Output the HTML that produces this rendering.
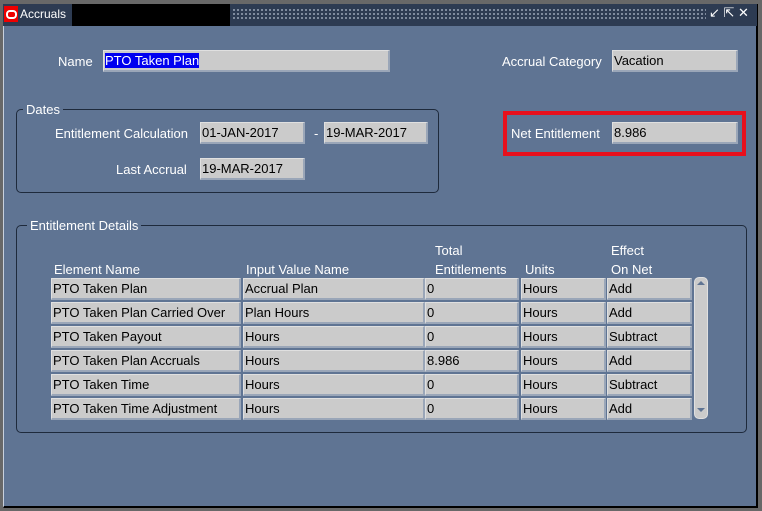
<!DOCTYPE html><html><head><style>
body{margin:0;width:762px;height:511px;background:#686868;position:relative;overflow:hidden;font-family:"Liberation Sans",sans-serif;font-size:13px;}
.a{position:absolute}
.win{left:3px;top:4px;width:752px;height:502px;background:#5f7493;border-right:2px solid #000;border-bottom:2px solid #000;border-left:1px solid #c8d0dc}
.tb{left:3px;top:4px;width:754px;height:22px;background:#2d3b52}
.l{color:#fff;white-space:nowrap}
.f{background:#cbcbcb;border-right:2px solid #9aa6b8;border-bottom:2px solid #9aa6b8;border-top:1px solid #e0e0e0;border-left:1px solid #e0e0e0;box-sizing:border-box;padding:1px 1px;color:#000;white-space:nowrap;overflow:hidden;line-height:17px}
.box{border:1px solid #1e2a3c;border-radius:5px;box-sizing:border-box}
.lg{background:#5f7493;padding:0 3px;color:#fff}
</style></head><body>
<div class="a win"></div>
<div class="a tb"></div>
<div class="a" style="left:232px;top:8px;width:474px;height:13px;background-image:radial-gradient(#9aa6b8 0.8px,transparent 1px);background-size:4px 4px"></div>
<div class="a" style="left:4px;top:6px;width:14px;height:16px;background:#e00"><div class="a" style="left:2px;top:4px;width:7px;height:5px;border:2px solid #fff;border-radius:4px"></div></div>
<div class="a l" style="left:20px;top:7px;font-size:12px">Accruals</div>
<div class="a" style="left:72px;top:4px;width:158px;height:22px;background:#000"></div>
<div class="a l" style="left:709px;top:5px;font-size:13px">↙ ⇱ ✕</div>

<div class="a l" style="left:58px;top:54px">Name</div>
<div class="a f" style="left:103px;top:50px;width:287px;height:22px"><span style="background:#0000f0;color:#fff">PTO Taken Plan</span></div>
<div class="a l" style="left:502px;top:54px">Accrual Category</div>
<div class="a f" style="left:612px;top:50px;width:126px;height:22px">Vacation</div>

<div class="a box" style="left:16px;top:109px;width:423px;height:84px"></div>
<div class="a lg" style="left:23px;top:102px">Dates</div>
<div class="a l" style="left:55px;top:126px">Entitlement Calculation</div>
<div class="a f" style="left:200px;top:122px;width:105px;height:22px">01-JAN-2017</div>
<div class="a l" style="left:314px;top:126px">-</div>
<div class="a f" style="left:324px;top:122px;width:104px;height:22px">19-MAR-2017</div>
<div class="a l" style="left:116px;top:162px">Last Accrual</div>
<div class="a f" style="left:200px;top:158px;width:105px;height:22px">19-MAR-2017</div>

<div class="a" style="left:503px;top:111px;width:243px;height:45px;border:4px solid #e8101c;box-sizing:border-box"></div>
<div class="a l" style="left:511px;top:126px">Net Entitlement</div>
<div class="a f" style="left:612px;top:122px;width:126px;height:22px">8.986</div>

<div class="a box" style="left:16px;top:225px;width:731px;height:208px"></div>
<div class="a lg" style="left:27px;top:218px">Entitlement Details</div>
<div class="a l" style="left:54px;top:262px">Element Name</div>
<div class="a l" style="left:246px;top:262px">Input Value Name</div>
<div class="a l" style="left:435px;top:243px">Total</div>
<div class="a l" style="left:435px;top:262px">Entitlements</div>
<div class="a l" style="left:525px;top:262px">Units</div>
<div class="a l" style="left:611px;top:243px">Effect</div>
<div class="a l" style="left:611px;top:262px">On Net</div>

<div id="rows"></div>
<script>
var d=[["PTO Taken Plan","Accrual Plan","0","Hours","Add"],["PTO Taken Plan Carried Over","Plan Hours","0","Hours","Add"],["PTO Taken Payout","Hours","0","Hours","Subtract"],["PTO Taken Plan Accruals","Hours","8.986","Hours","Add"],["PTO Taken Time","Hours","0","Hours","Subtract"],["PTO Taken Time Adjustment","Hours","0","Hours","Add"]];
var c=[[51,190],[243,182],[425,94],[521,85],[607,85]],h="";
d.forEach(function(r,i){r.forEach(function(t,j){h+='<div class="a f" style="left:'+c[j][0]+'px;top:'+(278+i*24)+'px;width:'+c[j][1]+'px;height:22px">'+t+'</div>'})});
document.getElementById('rows').innerHTML=h;
</script>
<div class="a" style="left:694px;top:277px;width:14px;height:142px;background:#cbcbcb;border:1px solid #e0e0e0;border-radius:5px;box-sizing:border-box"></div>
<div class="a" style="left:697px;top:281px;width:0;height:0;border-left:4px solid transparent;border-right:4px solid transparent;border-bottom:4px solid #5f7493"></div>
<div class="a" style="left:697px;top:408px;width:0;height:0;border-left:4px solid transparent;border-right:4px solid transparent;border-top:4px solid #5f7493"></div>
</body></html>
